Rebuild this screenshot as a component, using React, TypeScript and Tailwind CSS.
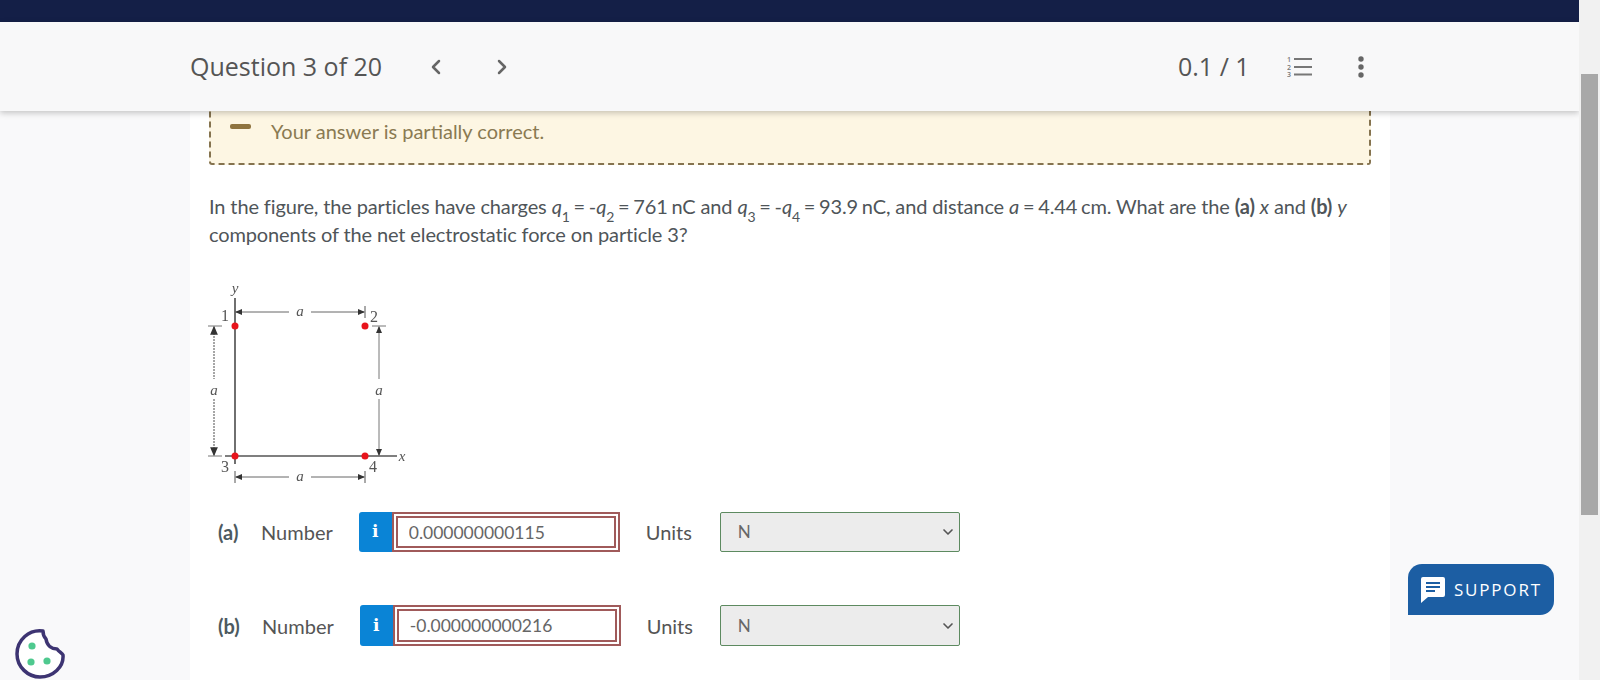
import { ChevronDown, ChevronLeft, ChevronRight } from 'lucide-react';

const sans = 'font-["Open_Sans",sans-serif]';

function Q({ n }: { n: number }) {
  return (
    <>
      <i>q</i>
      <sub className="text-[14px] align-[-4px] leading-none">{n}</sub>
    </>
  );
}

function Figure() {
  const ink = '#333';
  const serif = { fontFamily: '"Liberation Serif", serif', fill: '#555' };
  const label = { ...serif, fontSize: 15, fontStyle: 'italic' as const, textAnchor: 'middle' as const };
  const num = { ...serif, fontSize: 16, textAnchor: 'middle' as const };
  return (
    <svg width="210" height="210" viewBox="0 0 210 210" className="block overflow-visible blur-[0.35px]">
      <defs>
        <marker id="tip" markerWidth="7" markerHeight="6" refX="6" refY="3" orient="auto-start-reverse">
          <path d="M0 0L7 3L0 6z" fill={ink} />
        </marker>
      </defs>
      {/* axes */}
      <path d="M35 17V183" stroke={ink} strokeWidth="1.4" />
      <path d="M25 175H197" stroke="#555" strokeWidth="1.4" />
      {/* top and bottom dimensions */}
      <path d="M165 25V37M35 190V202M165 190V202" stroke="#555" />
      <path d="M36 31H89M111 31H164" stroke="#666" markerStart="url(#tip)" markerEnd="url(#tip)" />
      <path d="M36 196H89M111 196H164" stroke="#666" markerStart="url(#tip)" markerEnd="url(#tip)" />
      {/* left and right dimensions */}
      <path d="M8 45H22M8 175H22M172 45H186" stroke="#777" />
      <path d="M14 46V98M14 118V174" stroke="#777" strokeWidth="1.3" strokeDasharray="2 1" markerStart="url(#tip)" markerEnd="url(#tip)" />
      <path d="M179 46V98M179 118V174" stroke="#777" markerStart="url(#tip)" markerEnd="url(#tip)" />
      <circle cx="35" cy="45" r="3.5" fill="#e8141c" />
      <circle cx="165" cy="45" r="3.5" fill="#e8141c" />
      <circle cx="35" cy="175" r="3.5" fill="#e8141c" />
      <circle cx="165" cy="175" r="3.5" fill="#e8141c" />
      <text x="35" y="12" {...label}>y</text>
      <text x="202" y="180" {...label}>x</text>
      <text x="100" y="35" {...label}>a</text>
      <text x="100" y="200" {...label}>a</text>
      <text x="14" y="114" {...label}>a</text>
      <text x="179" y="114" {...label}>a</text>
      <text x="25" y="40" {...num}>1</text>
      <text x="174" y="41" {...num}>2</text>
      <text x="25" y="191" {...num}>3</text>
      <text x="173" y="191" {...num}>4</text>
    </svg>
  );
}

function ListIcon() {
  return (
    <svg width="26" height="24" viewBox="0 0 26 24" className="block">
      <g fontSize="7" fontWeight="600" fill="#777" fontFamily='"Open Sans", sans-serif'>
        <text x="0" y="7">1</text>
        <text x="0" y="14.5">2</text>
        <text x="0" y="22">3</text>
      </g>
      <path d="M7 4H25M7 12H25M7 19.5H25" stroke="#777" strokeWidth="2.2" />
    </svg>
  );
}

function Kebab() {
  return (
    <svg width="8" height="22" viewBox="0 0 8 22" className="block">
      <circle cx="4" cy="3" r="2.7" fill="#666" />
      <circle cx="4" cy="11" r="2.7" fill="#666" />
      <circle cx="4" cy="19" r="2.7" fill="#666" />
    </svg>
  );
}

function Answer({ part, value, shift, units, tall }: { part: string; value: string; shift: string; units: string; tall: string }) {
  return (
    <div className={`flex items-center ${tall}`}>
      <b className="w-[43px] font-bold text-[#4d5a60] text-[20px]">{part}</b>
      <span className={`text-[20px] text-[#555] ${shift}`}>Number</span>
      <div className="ml-[26px] flex h-full w-[33px] items-center justify-center rounded-l-[3px] bg-[#0a84d6]">
        <span className='text-[17px] font-bold text-white font-["DejaVu_Serif",serif]'>i</span>
      </div>
      <input
        readOnly
        value={value}
        className="h-full w-[228px] rounded-none border-[6px] border-double border-[#a05a5a] bg-white pl-[11px] text-[17.5px] text-[#666] outline-none"
      />
      <span className={`ml-[26px] text-[20px] text-[#555] ${units}`}>Units</span>
      <div className="relative h-full w-[240px]">
        <select className="h-full w-full appearance-none rounded-[2px] border border-[#5d8a60] bg-[#ececec] pl-[17px] text-[17px] text-[#666] outline-none">
          <option>N</option>
        </select>
        <ChevronDown size={16} strokeWidth={2.5} className="absolute right-[4px] top-1/2 -translate-y-1/2 text-[#555]" />
      </div>
    </div>
  );
}

export default function App() {
  return (
    <div className='relative flex h-[680px] overflow-hidden bg-[#f1f1f1] font-["Lato",sans-serif]'>
      <div className="h-full w-[1579px] overflow-hidden bg-[#f9f9fa]">
        <div className="relative z-10 h-[22px] bg-[#141f47]" />
        <header className={`relative z-10 flex h-[89px] items-center bg-[#f8f8f9] pl-[190px] shadow-[0_2px_6px_rgba(0,0,0,0.22)] ${sans}`}>
          <span className="w-[234px] text-[25px] text-[#555]">Question 3 of 20</span>
          <ChevronLeft size={24} strokeWidth={2.5} className="text-[#666]" />
          <ChevronRight size={24} strokeWidth={2.5} className="ml-[42px] text-[#666]" />
          <span className="ml-[664px] w-[109px] text-[25px] text-[#555]">0.1 / 1</span>
          <ListIcon />
          <div className="ml-[44px]">
            <Kebab />
          </div>
        </header>

        <main className="ml-[190px] h-full w-[1200px] bg-white px-[19px]">
          <div className="-mt-1 flex h-[58px] w-[1162px] rounded-[3px] border-2 border-dashed border-[#85734f] bg-[#fdf6e3] pl-[19px] pt-[10px]">
            <div className="mt-[5px] h-[5px] w-[21px] rounded-[2px] bg-[#8f7440]" />
            <p className="ml-[20px] text-[20px] leading-[24px] text-[#8a7a52]">Your answer is partially correct.</p>
          </div>

          <p className="mt-[28px] w-[1162px] text-[20px] leading-[27.5px] tracking-[-0.13px] text-[#4f5559]">
            In the figure, the particles have charges{' '}
            <span className="[word-spacing:-1.2px]">
              <Q n={1} /> = -<Q n={2} /> = 761 nC
            </span>{' '}
            and{' '}
            <span className="[word-spacing:-1.2px]">
              <Q n={3} /> = -<Q n={4} /> = 93.9 nC,
            </span>{' '}
            and distance{' '}
            <span className="[word-spacing:-1.2px]">
              <i>a</i> = 4.44 cm.
            </span>{' '}
            What are the <b>(a)</b> <i>x</i> and <b>(b)</b> <i>y</i> components of the net electrostatic force on particle 3?
          </p>

          <div className="mt-[33px] -ml-[9px]">
            <Figure />
          </div>

          <div className="mt-[21px] pl-[9px]">
            <Answer part="(a)" value="0.000000000115" shift="" units="w-[74px]" tall="h-[40px]" />
            <div className="mt-[53px]">
              <Answer part="(b)" value="-0.000000000216" shift="ml-[1px]" units="w-[73px]" tall="h-[41px]" />
            </div>
          </div>
        </main>
      </div>

      <aside className="w-[21px] pl-[2px] pr-[2px] pt-[74px]">
        <div className="h-[441px] bg-[#a8a8a8]" />
      </aside>

      <button className={`absolute left-[1408px] top-[564px] flex h-[51px] w-[146px] items-center rounded-t-[14px] rounded-br-[14px] bg-[#1c5ea3] pl-[12px] ${sans}`}>
        <svg width="26" height="28" viewBox="0 0 26 28" className="block">
          <path d="M3 1H23Q25 1 25 3V19Q25 21 23 21H8L1 27V3Q1 1 3 1Z" fill="#fff" />
          <path d="M6 7H20M6 11H20M6 15H15" stroke="#1c5ea3" strokeWidth="2" />
        </svg>
        <span className="ml-[8px] text-[17px] tracking-[1.8px] text-white">SUPPORT</span>
      </button>

      <svg width="52" height="52" viewBox="0 0 52 52" className="absolute left-[14px] top-[628px]">
        <path
          d="M29 3C15 1 3 12 3 26C3 39 14 49 26 49C39 49 50 39 49 27C48 25 45 24 43 21C38 21 33 18 32 11C30 9 29 6 29 3Z"
          fill="#fff"
          stroke="#3d3472"
          strokeWidth="3.5"
          strokeLinejoin="round"
        />
        <circle cx="18" cy="18" r="3.6" fill="#4fc98f" />
        <circle cx="17" cy="34" r="3.6" fill="#4fc98f" />
        <circle cx="33" cy="33" r="3.6" fill="#4fc98f" />
      </svg>
    </div>
  );
}
